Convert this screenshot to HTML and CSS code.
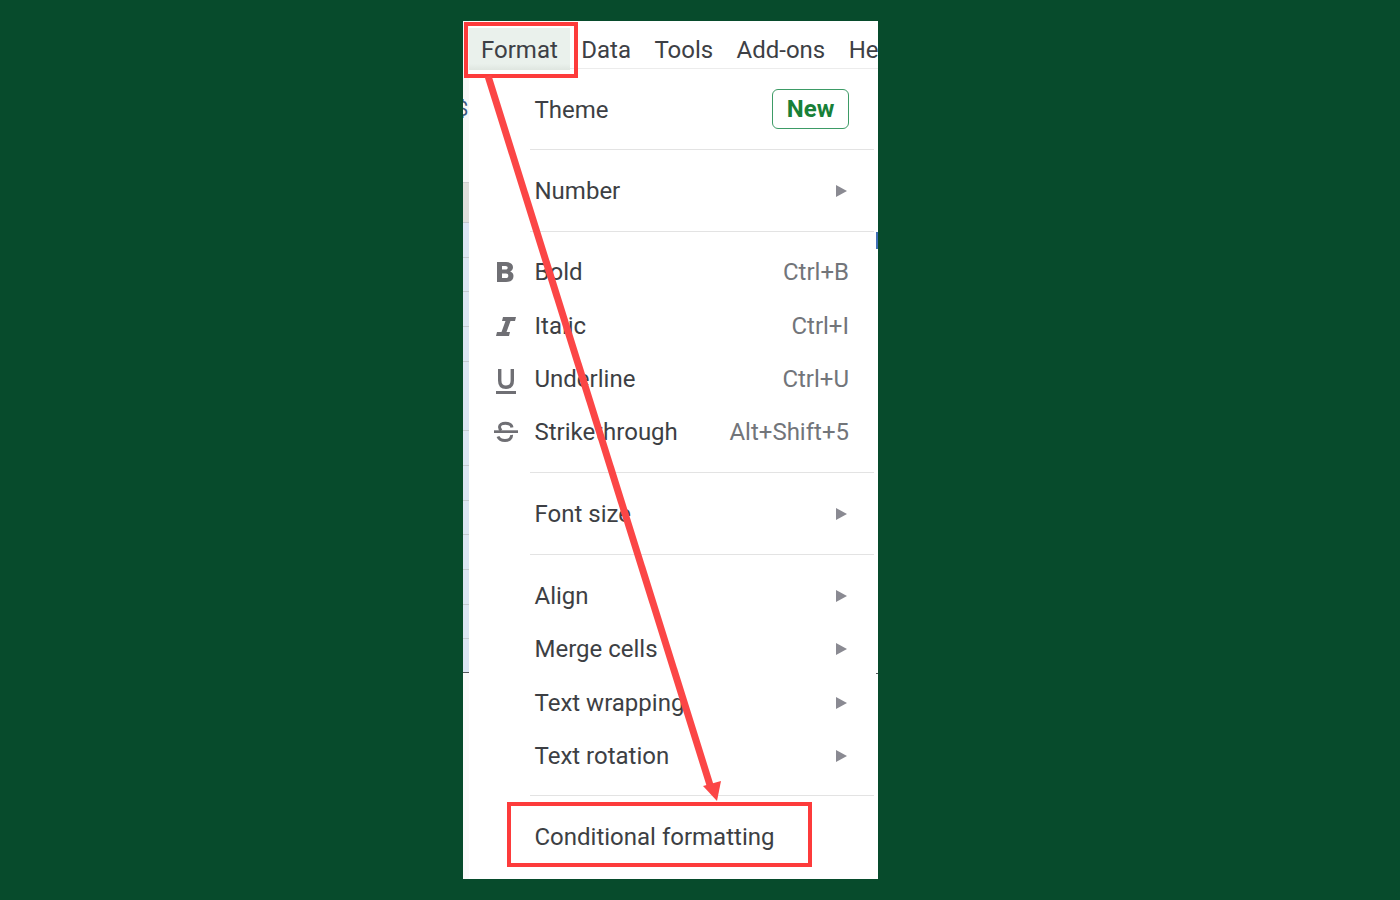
FILE: index.html
```html
<!DOCTYPE html>
<html lang="en">
<head>
    <meta charset="UTF-8">
    <title>Format menu</title>
    <link rel="stylesheet" href="styles.css">
</head>
<body>
    <div class="window">
        <!-- sliver of the sheet showing behind the menu -->
        <div class="sheet-edge">
            <div class="edge-top"><span class="edge-glyph">$</span></div>
            <div class="edge-header"></div>
            <div class="edge-cells"></div>
            <div class="edge-bottom"></div>
        </div>
        <div class="pane">
            <div class="menubar">
                <span class="menubar-item active">Format</span>
                <span class="menubar-item">Data</span>
                <span class="menubar-item">Tools</span>
                <span class="menubar-item">Add-ons</span>
                <span class="menubar-item">Help</span>
            </div>
            <div class="menu">
                <div class="row row-theme">
                    <span class="label">Theme</span>
                    <span class="new-badge">New</span>
                </div>
                <div class="sep sep-first"></div>
                <div class="row">
                    <span class="label">Number</span>
                    <span class="arrow"></span>
                </div>
                <div class="sep"></div>
                <div class="row">
                    <span class="icon">
                        <svg width="24" height="24" viewBox="0 0 24 24"><path d="M3 2h9c4.500 0 7 2.200 7 5.300 0 1.900-1 3.400-2.800 4.100 2.200.6 3.300 2.300 3.300 4.500 0 3.700-2.600 6.100-7.500 6.100H3zM8 6v3.600h3.500c1.400 0 2.200-.7 2.200-1.800S12.900 6 11.500 6zM8 13.500V18h4c1.500 0 2.300-.8 2.300-2.300s-.8-2.200-2.300-2.200z" fill="#6f6f74" fill-rule="evenodd"/></svg>
                    </span>
                    <span class="label">Bold</span>
                    <span class="keys">Ctrl+B</span>
                </div>
                <div class="row">
                    <span class="icon">
                        <svg width="24" height="24" viewBox="0 0 24 24"><path d="M9 3H22L21 7H16.500L12.500 18H16L15 22H2L3 18H7.500L11.500 7H8z" fill="#6f6f74"/></svg>
                    </span>
                    <span class="label">Italic</span>
                    <span class="keys">Ctrl+I</span>
                </div>
                <div class="row">
                    <span class="icon">
                        <svg width="24" height="24" viewBox="0 0 24 24"><path d="M5.700 2v11.500c0 4.700 2.500 6.800 6.300 6.800s6.300-2.100 6.300-6.800V2" fill="none" stroke="#6f6f74" stroke-width="3.400"/><path d="M2 24h20v3H2z" fill="#6f6f74"/></svg>
                    </span>
                    <span class="label">Underline</span>
                    <span class="keys">Ctrl+U</span>
                </div>
                <div class="row">
                    <span class="icon">
                        <svg width="24" height="24" viewBox="0 0 24 24"><path d="M0 10.300h24V13H0z" fill="#6f6f74"/><path d="M18 7.500C17.500 4 15 3.300 11.500 3.300 8 3.300 5.500 4.800 5.500 7c0 1.300.6 2.500 1.800 3.500M17.500 15c.3 3.500-2.500 5.500-6.500 5.500-3.500 0-6-1.300-7-4" fill="none" stroke="#6f6f74" stroke-width="3"/></svg>
                    </span>
                    <span class="label">Strikethrough</span>
                    <span class="keys">Alt+Shift+5</span>
                </div>
                <div class="sep"></div>
                <div class="row">
                    <span class="label">Font size</span>
                    <span class="arrow"></span>
                </div>
                <div class="sep"></div>
                <div class="row">
                    <span class="label">Align</span>
                    <span class="arrow"></span>
                </div>
                <div class="row">
                    <span class="label">Merge cells</span>
                    <span class="arrow"></span>
                </div>
                <div class="row">
                    <span class="label">Text wrapping</span>
                    <span class="arrow"></span>
                </div>
                <div class="row">
                    <span class="label">Text rotation</span>
                    <span class="arrow"></span>
                </div>
                <div class="sep sep-last"></div>
                <div class="row">
                    <span class="label">Conditional formatting</span>
                </div>
            </div>
        </div>

        <!-- bits of the sheet peeking out on the right -->
        <div class="edge-mark edge-mark-blue"></div>
        <div class="edge-mark edge-mark-dark"></div>
    </div>

    <!-- annotations drawn over the screenshot -->
    <div class="callout callout-format"></div>
    <div class="callout callout-cond"></div>
    <svg class="pointer" width="1400" height="900" viewBox="0 0 1400 900">
        <path d="M488 76L710 785" stroke="#fb4646" stroke-width="7" fill="none"/>
        <path d="M703 786L721 781L717 801z" fill="#fb4646"/>
    </svg>
</body>
</html>
```

FILE: styles.css
```css
body {
    margin: 0;
    padding-top: 21px;
    height: 879px;
    overflow: hidden;
    background-color: #074b2c;
    font-family: Roboto, "Liberation Sans", sans-serif;
}

.window {
    display: flex;
    position: relative;
    width: 415px;
    height: 858px;
    margin-left: 463px;
    background-color: #fff;
}

.sheet-edge {
    width: 6px;
    flex-shrink: 0;
    display: flex;
    flex-direction: column;
    overflow: hidden;
}

.edge-top {
    height: 161px;
    position: relative;
    background-color: #f7f7f7;
}

.edge-glyph {
    position: absolute;
    left: -6px;
    top: 76px;
    font-size: 20px;
    color: #3c5a80;
}

.edge-header {
    height: 40px;
    background-color: #dfdfdb;
    border-top: 1px solid #cfcfcf;
    box-sizing: border-box;
}

.edge-cells {
    height: 451px;
    border-top: 1px solid #c4c8cc;
    border-bottom: 1px solid #55585c;
    box-sizing: border-box;
    background: repeating-linear-gradient(#dce6f4 0, #dce6f4 33.700px, #c4cbd2 33.700px, #c4cbd2 34.700px);
}

.edge-bottom {
    flex: 1;
    background-color: #fafafa;
}

.pane {
    flex: 1;
    min-width: 0;
}

.menubar {
    height: 50px;
    box-sizing: border-box;
    padding-top: 7px;
    display: flex;
    align-items: flex-start;
    overflow: hidden;
    white-space: nowrap;
    font-size: 24px;
    line-height: 44px;
    color: #3d4045;
    background: linear-gradient(#fff 47px, #ececec 47px, #ececec 48px, #fff 48px);
}

.menubar-item {
    margin-right: 23.400px;
}

.menubar-item.active {
    height: 42px;
    padding: 0 12px;
    margin-right: 11.500px;
    background: linear-gradient(#eaf1ec 85%, #dfe6e0);
}

.menu {
    padding-left: 65.500px;
    padding-right: 29px;
    font-size: 24px;
    color: #3d3f44;
}

.row {
    height: 53.300px;
    display: flex;
    align-items: center;
    justify-content: space-between;
    position: relative;
}

.row-theme {
    height: 77px;
}

.label {
    white-space: nowrap;
}

.icon {
    position: absolute;
    left: -40.500px;
    top: 14.500px;
    width: 24px;
    height: 24px;
}

.icon svg {
    display: block;
    overflow: visible;
}

.keys {
    color: #72757a;
    white-space: nowrap;
}

.arrow {
    width: 0;
    height: 0;
    border-left: 11px solid #8a8a92;
    border-top: 6px solid transparent;
    border-bottom: 6px solid transparent;
    margin-right: 2px;
}

.sep {
    height: 1px;
    background-color: #e3e3e3;
    margin: 13.500px -25px 14px -5px;
}

.sep-first {
    margin-top: 1px;
}

.sep-last {
    margin-top: 12.500px;
}

.new-badge {
    width: 75px;
    height: 38px;
    margin-bottom: 2px;
    border: 1.500px solid #3d9b66;
    border-radius: 6px;
    color: #188038;
    font-weight: 700;
    display: flex;
    align-items: center;
    justify-content: center;
}

.edge-mark {
    position: absolute;
    right: 0;
    width: 2px;
}

.edge-mark-blue {
    top: 211px;
    height: 17px;
    background-color: #3f6fb5;
}

.edge-mark-dark {
    top: 652px;
    height: 1px;
    background-color: #55585c;
}

.callout {
    position: absolute;
    border: 4px solid #fd3b3b;
    box-sizing: border-box;
}

.callout-format {
    left: 464px;
    top: 22px;
    width: 114px;
    height: 56px;
}

.callout-cond {
    left: 507px;
    top: 802px;
    width: 305px;
    height: 65px;
}

.pointer {
    position: absolute;
    left: 0;
    top: 0;
}
```
